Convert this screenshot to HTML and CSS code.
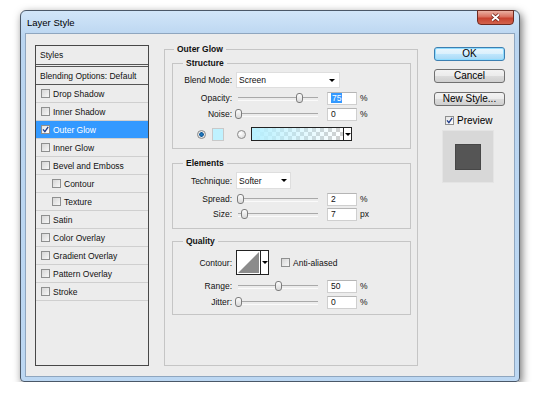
FILE: index.html
```html
<!DOCTYPE html>
<html lang="en">

<head>
    <meta charset="UTF-8">
    <title>Layer Style</title>
    <link rel="stylesheet" href="styles.css">
</head>

<body>
    <div class="window">
        <div class="titlebar">
            <span class="title">Layer Style</span>
            <span class="close">
                <svg width="11" height="9" viewBox="0 0 11 9">
                    <path d="M2 1.5 L9 7.5 M9 1.5 L2 7.5" stroke="#6b1d12" stroke-width="3.4" fill="none" />
                    <path d="M2 1.5 L9 7.5 M9 1.5 L2 7.5" stroke="#fff" stroke-width="1.8" fill="none" />
                </svg>
            </span>
        </div>
        <div class="client">
            <ul class="styles">
                <li class="styles-head">Styles</li>
                <li class="styles-blend">Blending Options: Default</li>
                <li><span class="check"></span>Drop Shadow</li>
                <li><span class="check"></span>Inner Shadow</li>
                <li class="active"><span class="check checked"><svg width="7" height="7" viewBox="0 0 7 7"><path d="M1 3.3 L2.9 5.6 L6.2 0.8" stroke="#1d3a8a" stroke-width="1.3" fill="none" /></svg></span>Outer Glow</li>
                <li><span class="check"></span>Inner Glow</li>
                <li><span class="check"></span>Bevel and Emboss</li>
                <li class="sub"><span class="check"></span>Contour</li>
                <li class="sub"><span class="check"></span>Texture</li>
                <li><span class="check"></span>Satin</li>
                <li><span class="check"></span>Color Overlay</li>
                <li><span class="check"></span>Gradient Overlay</li>
                <li><span class="check"></span>Pattern Overlay</li>
                <li><span class="check"></span>Stroke</li>
            </ul>

            <div class="settings">
                <div class="group-title">Outer Glow</div>

                <div class="group structure">
                    <div class="group-title">Structure</div>
                    <div class="row row-select">
                        <span class="label">Blend Mode:</span>
                        <div class="select select-blend">Screen<span class="arrow"></span></div>
                    </div>
                    <div class="row">
                        <span class="label">Opacity:</span>
                        <div class="slider"><span class="thumb" style="left: 76%"></span></div>
                        <span class="field"><span class="selected">75</span></span>
                        <span class="unit">%</span>
                    </div>
                    <div class="row">
                        <span class="label">Noise:</span>
                        <div class="slider"><span class="thumb" style="left: 0%"></span></div>
                        <span class="field">0</span>
                        <span class="unit">%</span>
                    </div>
                    <div class="row row-color">
                        <span class="radio on"></span>
                        <span class="swatch"></span>
                        <span class="radio radio-second"></span>
                        <div class="gradient">
                            <span class="gradient-fill"></span>
                            <span class="drop"><span class="arrow"></span></span>
                        </div>
                    </div>
                </div>

                <div class="group elements">
                    <div class="group-title">Elements</div>
                    <div class="row row-select">
                        <span class="label">Technique:</span>
                        <div class="select select-technique">Softer<span class="arrow"></span></div>
                    </div>
                    <div class="row">
                        <span class="label">Spread:</span>
                        <div class="slider"><span class="thumb" style="left: 2.5%"></span></div>
                        <span class="field">2</span>
                        <span class="unit">%</span>
                    </div>
                    <div class="row row-tight">
                        <span class="label">Size:</span>
                        <div class="slider"><span class="thumb" style="left: 7.5%"></span></div>
                        <span class="field">7</span>
                        <span class="unit">px</span>
                    </div>
                </div>

                <div class="group quality">
                    <div class="group-title">Quality</div>
                    <div class="row row-contour">
                        <span class="label">Contour:</span>
                        <div class="contour">
                            <svg class="contour-curve" width="23" height="23" viewBox="0 0 23 23">
                                <polygon points="1,22 22,1 22,22" fill="#8b8b8b" />
                            </svg>
                            <span class="drop"><span class="arrow"></span></span>
                        </div>
                        <span class="check anti"></span>
                        <span class="check-label">Anti-aliased</span>
                    </div>
                    <div class="row">
                        <span class="label">Range:</span>
                        <div class="slider"><span class="thumb" style="left: 50%"></span></div>
                        <span class="field">50</span>
                        <span class="unit">%</span>
                    </div>
                    <div class="row">
                        <span class="label">Jitter:</span>
                        <div class="slider"><span class="thumb" style="left: 0%"></span></div>
                        <span class="field">0</span>
                        <span class="unit">%</span>
                    </div>
                </div>
            </div>

            <div class="actions">
                <div class="btn btn-default">OK</div>
                <div class="btn btn-cancel">Cancel</div>
                <div class="btn btn-new">New Style...</div>
                <div class="preview-toggle">
                    <span class="check checked"><svg width="7" height="7" viewBox="0 0 7 7"><path d="M1 3.3 L2.9 5.6 L6.2 0.8" stroke="#1d3a8a" stroke-width="1.3" fill="none" /></svg></span>
                    <span class="preview-label">Preview</span>
                </div>
                <div class="preview">
                    <span class="preview-square"></span>
                </div>
            </div>
        </div>
    </div>
</body>

</html>
```

FILE: styles.css
```css
* {
    margin: 0;
    padding: 0;
    box-sizing: border-box;
}

body {
    background-color: #fff;
    font-family: "Liberation Sans", Arial, sans-serif;
    font-size: 8.5px;
    color: #111;
}

/* window frame */
.window {
    display: flex;
    flex-direction: column;
    width: 500px;
    height: 372px;
    margin: 10px 0 0 20px;
    padding: 0 4px 4px;
    border: 1px solid #4b5868;
    border-radius: 6px 6px 4px 4px;
    background: linear-gradient(#d2e6f9, #bad5f0 7%, #bcd7f2);
    box-shadow: 2px 3px 8px rgba(0, 0, 0, 0.55);
}

.titlebar {
    display: flex;
    align-items: center;
    justify-content: space-between;
    height: 22px;
    padding-left: 2px;
}

.title {
    font-size: 9.5px;
    color: #000;
}

.close {
    display: flex;
    align-items: center;
    justify-content: center;
    align-self: flex-start;
    width: 37px;
    height: 15px;
    margin: -1px 1px 0 0;
    border: 1px solid #6e2a20;
    border-radius: 0 0 4px 4px;
    background: linear-gradient(#eab0a2, #d9705f 45%, #c7422f 55%, #d2634c);
}

.client {
    display: flex;
    align-items: flex-start;
    flex: 1;
    padding: 11px 0 0 9px;
    border: 1px solid #8fa6bf;
    background-color: #ececec;
}

/* styles list */
.styles {
    list-style: none;
    flex-shrink: 0;
    width: 114px;
    height: 321px;
    border: 1px solid #474747;
}

.styles li {
    display: flex;
    align-items: center;
    height: 18px;
    padding-left: 5px;
    border-bottom: 1px solid #cfcfcf;
    white-space: nowrap;
}

.styles .styles-head {
    height: 19px;
    margin-bottom: 1px;
    padding-left: 4px;
    border-bottom: 1px solid #555;
}

.styles .styles-blend {
    height: 19px;
    padding-left: 4px;
    border-top: 1px solid #555;
    border-bottom: 1px solid #555;
}

.styles .sub {
    padding-left: 16px;
}

.styles .active {
    background-color: #3399ff;
    color: #fff;
}

.check {
    display: inline-flex;
    align-items: center;
    justify-content: center;
    flex-shrink: 0;
    width: 9px;
    height: 9px;
    margin-right: 3px;
    border: 1px solid #8e8f8f;
    background: linear-gradient(135deg, #d6d6d6, #f7f7f7);
}

.active .check,
.check.checked {
    background: linear-gradient(135deg, #e4e4e4, #fff);
}

/* settings column */
.settings {
    flex-shrink: 0;
    width: 254px;
    height: 317px;
    margin: 4px 0 0 15px;
    padding: 0 6px 0 7px;
    border: 1px solid #c5c5c5;
}

.group {
    border: 1px solid #c5c5c5;
}

.group-title {
    display: table;
    margin: -6px 0 0 10px;
    padding: 0 3px;
    line-height: 11px;
    font-weight: bold;
    background-color: #ececec;
}

.settings > .group-title {
    margin-left: 2px;
}

.structure {
    margin-top: 8px;
    padding-bottom: 7px;
}

.elements {
    margin-top: 14px;
    padding-bottom: 7px;
}

.quality {
    margin-top: 12px;
    padding-bottom: 5px;
}

.row {
    display: flex;
    align-items: center;
    height: 14px;
    margin-top: 2px;
}

.row-select {
    margin-top: 3px;
    height: auto;
}

.row-select + .row {
    margin-top: 3px;
}

.row-tight {
    margin-top: 1px;
}

.row-color {
    margin-top: 6px;
}

.row-contour {
    height: 25px;
    margin-top: 3px;
}

.row-contour + .row {
    margin-top: 4px;
}

.label {
    flex-shrink: 0;
    width: 59px;
    text-align: right;
}

.select {
    display: flex;
    align-items: center;
    justify-content: space-between;
    margin-left: 4px;
    padding: 0 4px 0 2px;
    border: 1px solid #dedede;
    background-color: #fff;
}

.select-blend {
    width: 104px;
    height: 16px;
}

.select-technique {
    width: 55px;
    height: 17px;
    padding-right: 3px;
}

.arrow {
    width: 0;
    height: 0;
    border-left: 3px solid transparent;
    border-right: 3px solid transparent;
    border-top: 3px solid #000;
}

.slider {
    position: relative;
    flex-shrink: 0;
    width: 80px;
    height: 10px;
    margin: 0 9px 0 6px;
}

.slider::before {
    content: "";
    position: absolute;
    left: 0;
    right: 0;
    top: 4px;
    height: 2px;
    border-top: 1px solid #a9a9a9;
    border-bottom: 1px solid #fafafa;
}

.thumb {
    position: absolute;
    top: 0;
    width: 7px;
    height: 10px;
    margin-left: -3px;
    border: 1px solid #7c7c7c;
    border-radius: 3px 3px 3px 3px;
    background: linear-gradient(#fdfdfd, #d9d9d9);
}

.field {
    flex-shrink: 0;
    width: 30px;
    height: 13px;
    padding-left: 3px;
    line-height: 11px;
    border: 1px solid #cfcfcf;
    border-top-color: #b5b5b5;
    background-color: #fff;
}

.selected {
    padding: 0 1px;
    background-color: #3399ff;
    color: #fff;
}

.unit {
    margin-left: 3px;
}

.radio {
    flex-shrink: 0;
    width: 9px;
    height: 9px;
    margin-left: 24px;
    border: 1px solid #8a8a8a;
    border-radius: 50%;
    background: radial-gradient(circle at 35% 35%, #fff, #d4d4d4);
}

.radio.on {
    background: radial-gradient(circle, #1f7fc7 0, #145c99 2px, #eaeaea 2.6px, #d0d0d0);
}

.radio-second {
    margin-left: 13px;
}

.swatch {
    width: 12px;
    height: 13px;
    margin-left: 6px;
    border: 1px solid #c9c9c9;
    background-color: #bff2ff;
}

.gradient {
    display: flex;
    width: 101px;
    height: 14px;
    margin-left: 5px;
    border: 1px solid #222;
}

.gradient-fill {
    flex: 1;
    background:
        linear-gradient(to right, #b8f1ff, rgba(190, 242, 255, 0.3) 70%, rgba(190, 242, 255, 0)),
        repeating-conic-gradient(#cfcfcf 0 25%, #fff 0 50%) 0 0 / 8px 8px;
}

.drop {
    display: flex;
    align-items: center;
    justify-content: center;
    width: 8px;
    border-left: 1px solid #222;
    background-color: #fff;
}

.contour {
    display: flex;
    width: 33px;
    height: 25px;
    margin-left: 4px;
    border: 1px solid #222;
    background-color: #fff;
}

.contour-curve {
    display: block;
}

.check.anti {
    margin: 0 3px 0 12px;
}

/* buttons column */
.actions {
    display: flex;
    flex-direction: column;
    flex-shrink: 0;
    width: 71px;
    margin-left: 16px;
    font-size: 10px;
    color: #000;
}

.btn {
    height: 14px;
    line-height: 12px;
    text-align: center;
    border: 1px solid #707070;
    border-radius: 3px;
    background: linear-gradient(#f3f3f3, #ebebeb 50%, #dcdcdc 51%, #cfcfcf);
}

.btn-default {
    margin-top: 2px;
    border-color: #3c7fb1;
    background: linear-gradient(#eaf6fd, #d9f0fc 50%, #bee6fd 51%, #a7d9f5);
    box-shadow: inset 0 0 0 1px #8fdcff;
}

.btn-cancel {
    margin-top: 8px;
}

.btn-new {
    margin-top: 9px;
}

.preview-toggle {
    display: flex;
    align-items: center;
    height: 10px;
    margin: 9px 0 0 11px;
}

.preview {
    display: flex;
    align-items: center;
    justify-content: center;
    width: 52px;
    height: 53px;
    margin: 5px 0 0 8px;
    border: 1px solid #e4e4e4;
    background-color: #d8d8d8;
}

.preview-square {
    width: 26px;
    height: 26px;
    border: 1px solid #474747;
    background-color: #555;
}
```
